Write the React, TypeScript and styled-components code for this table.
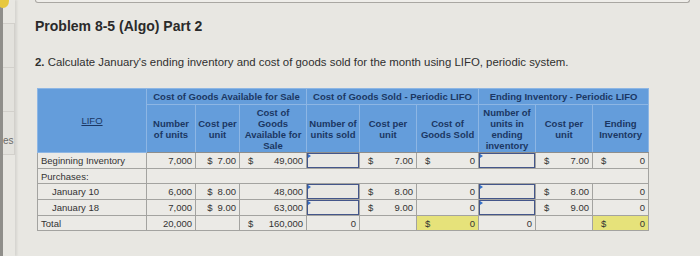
import React from "react";
import styled, { createGlobalStyle } from "styled-components";

const GlobalStyle = createGlobalStyle`
  body {
    margin: 0;
    background: #e8e7e2;
    font-family: "Liberation Sans", Arial, sans-serif;
  }
`;

const Page = styled.div`
  display: flex;
  width: 700px;
  height: 256px;
  overflow: hidden;
  background: #e8e7e2;
`;

const Side = styled.aside`
  position: relative;
  width: 12px;
  flex: none;
  border-left: 3px solid #8f8e8a;
  box-shadow: 2px 0 2px rgba(0, 0, 0, 0.08);
  display: flex;
  flex-direction: column;
  padding-top: 23px;
`;

const Badge = styled.span`
  position: absolute;
  top: -6px;
  left: -6px;
  width: 12px;
  height: 14px;
  border-radius: 50%;
  background: #e7c83e;
`;

const SideItem = styled.div`
  height: 44px;
  border-top: 1px solid #d2d0cb;
  border-right: 1px solid #d2d0cb;
  background: #e3e2dd;
  display: flex;
  align-items: flex-end;
  padding-bottom: 8px;
  box-sizing: border-box;
  font-size: 10px;
  color: #6a6a68;
  overflow: hidden;
  &:last-child {
    border-bottom: 1px solid #d2d0cb;
  }
`;

const Main = styled.main`
  flex: 1;
  padding-left: 20px;
  padding-right: 10px;
`;

const TopBox = styled.div`
  height: 2px;
  border: 1px solid #a9a7a2;
  border-top: none;
  border-radius: 0 0 4px 4px;
  background: #efeeea;
`;

const Title = styled.h1`
  margin: 15px 0 0;
  font-size: 14px;
  line-height: 16px;
  font-weight: bold;
  color: #2a2a2a;
`;

const Prompt = styled.p`
  margin: 22px 0 0;
  font-size: 11.4px;
  line-height: 13px;
  color: #2f2f2f;
  b {
    font-weight: bold;
  }
`;

const Table = styled.table`
  margin-top: 19px;
  margin-left: 2px;
  width: 611px;
  table-layout: fixed;
  border-collapse: collapse;
  font-size: 9.5px;
  color: #333;
  border: 1px solid #8e8e8c;
`;

const Th = styled.th<{ $sub?: boolean }>`
  background: #649ddb;
  color: #1b3763;
  font-weight: bold;
  text-align: center;
  vertical-align: middle;
  padding: 0 2px;
  line-height: ${(p) => (p.$sub ? "11px" : "15px")};
  height: ${(p) => (p.$sub ? "47px" : "15px")};
  border: 1px solid #8db6e4;
  border-bottom-color: ${(p) => (p.$sub ? "#8e8e8c" : "#8db6e4")};
`;

const LifoLink = styled.span`
  font-weight: normal;
  text-decoration: underline;
  color: #1b3763;
`;

const Td = styled.td<{ $indent?: boolean; $yellow?: boolean }>`
  height: 14px;
  padding: 0 3px 0 ${(p) => (p.$indent ? "14px" : "3px")};
  border: 1px solid #a3a3a0;
  background: ${(p) => (p.$yellow ? "#e6e27a" : "#ebeae6")};
  white-space: nowrap;
  text-align: left;
`;

const Money = styled.div<{ $tight?: boolean }>`
  display: flex;
  justify-content: ${(p) => (p.$tight ? "flex-end" : "space-between")};
  gap: 5px;
  padding-left: ${(p) => (p.$tight ? "0" : "5px")};
`;

const Num = styled.div`
  text-align: right;
`;

const InputCell = styled.td`
  height: 14px;
  padding: 0;
  border: 1px solid #a3a3a0;
  background: #ebeae6;
`;

const InputBox = styled.div`
  position: relative;
  height: 13px;
  border: 1.5px solid #44568a;
  background: #e9e8e4;
  &::before {
    content: "";
    position: absolute;
    top: 0;
    left: 0;
    border-top: 2px solid transparent;
    border-bottom: 2px solid transparent;
    border-left: 3px solid #3470c8;
  }
`;

type Row = {
  label: string;
  units: string;
  cost: string;
  avail: string;
  availDollar: boolean;
  sellCost: string;
  cogs: string;
  cogsDollar: boolean;
};

const rows: Row[] = [
  { label: "Beginning Inventory", units: "7,000", cost: "7.00", avail: "49,000", availDollar: true, sellCost: "7.00", cogs: "0", cogsDollar: true },
  { label: "January 10", units: "6,000", cost: "8.00", avail: "48,000", availDollar: false, sellCost: "8.00", cogs: "0", cogsDollar: false },
  { label: "January 18", units: "7,000", cost: "9.00", avail: "63,000", availDollar: false, sellCost: "9.00", cogs: "0", cogsDollar: false },
];

function DataRow({ row, indent }: { row: Row; indent?: boolean }) {
  return (
    <tr>
      <Td $indent={indent}>{row.label}</Td>
      <Td><Num>{row.units}</Num></Td>
      <Td><Money $tight><span>$</span><span>{row.cost}</span></Money></Td>
      <Td>
        <Money>
          <span>{row.availDollar ? "$" : ""}</span>
          <span>{row.avail}</span>
        </Money>
      </Td>
      <InputCell><InputBox /></InputCell>
      <Td><Money><span>$</span><span>{row.sellCost}</span></Money></Td>
      <Td>
        <Money>
          <span>{row.cogsDollar ? "$" : ""}</span>
          <span>{row.cogs}</span>
        </Money>
      </Td>
      <InputCell><InputBox /></InputCell>
      <Td><Money><span>$</span><span>{row.sellCost}</span></Money></Td>
      <Td>
        <Money>
          <span>{row.cogsDollar ? "$" : ""}</span>
          <span>{row.cogs}</span>
        </Money>
      </Td>
    </tr>
  );
}

export default function App() {
  return (
    <>
      <GlobalStyle />
      <Page>
        <Side>
          <Badge />
          <SideItem />
          <SideItem />
          <SideItem>es</SideItem>
        </Side>
        <Main>
          <TopBox />
          <Title>Problem 8-5 (Algo) Part 2</Title>
          <Prompt>
            <b>2.</b> Calculate January's ending inventory and cost of goods sold for the month using LIFO, periodic system.
          </Prompt>
          <Table>
            <colgroup>
              <col style={{ width: 109 }} />
              <col style={{ width: 49 }} />
              <col style={{ width: 44 }} />
              <col style={{ width: 67 }} />
              <col style={{ width: 53 }} />
              <col style={{ width: 57 }} />
              <col style={{ width: 62 }} />
              <col style={{ width: 57 }} />
              <col style={{ width: 57 }} />
              <col style={{ width: 56 }} />
            </colgroup>
            <thead>
              <tr>
                <Th rowSpan={2}><LifoLink>LIFO</LifoLink></Th>
                <Th colSpan={3}>Cost of Goods Available for Sale</Th>
                <Th colSpan={3}>Cost of Goods Sold - Periodic LIFO</Th>
                <Th colSpan={3}>Ending Inventory - Periodic LIFO</Th>
              </tr>
              <tr>
                <Th $sub>Number of units</Th>
                <Th $sub>Cost per unit</Th>
                <Th $sub>Cost of Goods Available for Sale</Th>
                <Th $sub>Number of units sold</Th>
                <Th $sub>Cost per unit</Th>
                <Th $sub>Cost of Goods Sold</Th>
                <Th $sub>Number of units in ending inventory</Th>
                <Th $sub>Cost per unit</Th>
                <Th $sub>Ending Inventory</Th>
              </tr>
            </thead>
            <tbody>
              <DataRow row={rows[0]} />
              <tr>
                <Td>Purchases:</Td>
                <Td colSpan={9} />
              </tr>
              <DataRow row={rows[1]} indent />
              <DataRow row={rows[2]} indent />
              <tr>
                <Td>Total</Td>
                <Td><Num>20,000</Num></Td>
                <Td />
                <Td><Money><span>$</span><span>160,000</span></Money></Td>
                <Td><Num>0</Num></Td>
                <Td />
                <Td $yellow><Money><span>$</span><span>0</span></Money></Td>
                <Td><Num>0</Num></Td>
                <Td />
                <Td $yellow><Money><span>$</span><span>0</span></Money></Td>
              </tr>
            </tbody>
          </Table>
        </Main>
      </Page>
    </>
  );
}
